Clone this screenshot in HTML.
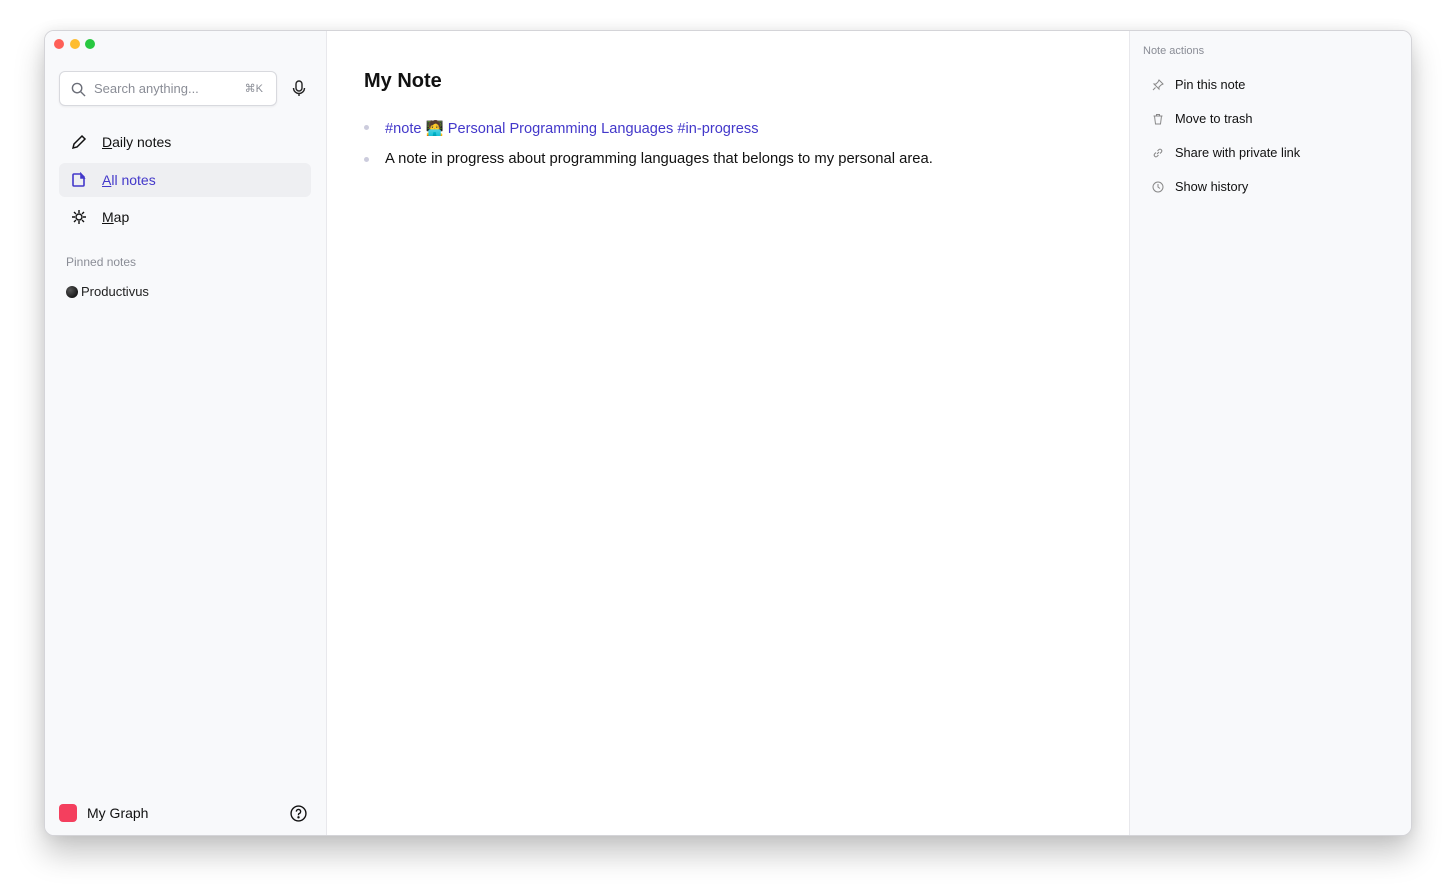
<!DOCTYPE html>
<html><head><meta charset="utf-8"><style>
*{box-sizing:border-box;margin:0;padding:0}
body{width:1456px;height:894px;background:#fff;font-family:"Liberation Sans",sans-serif;position:relative;overflow:hidden;color:#111}
.win{position:absolute;left:44px;top:30px;width:1368px;height:806px;border-radius:10px;background:#fff;border:1px solid #d4d4d8;box-shadow:0 18px 30px rgba(0,0,0,.22),0 0 14px rgba(0,0,0,.08);overflow:hidden}
.in{position:absolute;left:-1px;top:-1px;width:1368px;height:806px}
.side{position:absolute;left:0;top:0;width:283px;height:100%;background:#f8f9fb;border-right:1px solid #e8e8ec}
.right{position:absolute;left:1085px;top:0;right:0;height:100%;background:#f8f9fb;border-left:1px solid #e8e8ec}
.dot{position:absolute;top:9px;width:10px;height:10px;border-radius:50%}
.search{position:absolute;left:15px;top:41px;width:218px;height:35px;background:#fff;border:1px solid #d8d9de;border-radius:6px;box-shadow:0 1px 2px rgba(0,0,0,.06);font-size:13px;color:#8a8d96}
.nav{position:absolute;left:15px;width:252px;height:34px;border-radius:6px;font-size:14px;display:flex;align-items:center;padding-left:12px}
.nav svg{margin-right:15px}
.act{position:absolute;left:22px;font-size:12.8px;color:#111;display:flex;align-items:center}
.act svg{margin-right:11px}
</style></head><body>
<div class="win"><div class="in">
<div class="side">
<div class="dot" style="left:10px;background:#fe5f57"></div>
<div class="dot" style="left:26px;background:#febc2e"></div>
<div class="dot" style="left:41px;background:#28c840"></div>
<div class="search">
<svg style="position:absolute;left:11px;top:10px" width="15" height="15" viewBox="0 0 16 16" fill="none" stroke="#6b6e78" stroke-width="1.5"><circle cx="6.5" cy="6.5" r="5"/><path d="M10.5 10.5L15 15"/></svg>
<span style="position:absolute;left:34px;top:9px">Search anything...</span>
<span style="position:absolute;right:13px;top:10px;font-size:11px">⌘K</span>
</div>
<svg style="position:absolute;left:248px;top:50px" width="14" height="17" viewBox="0 0 14 17" fill="none" stroke="#222" stroke-width="1.4"><rect x="4" y="1" width="6" height="10" rx="3"/><path d="M1.5 8a5.5 5.5 0 0 0 11 0M7 13.5V16"/></svg>
<div class="nav" style="top:95px"><svg width="16" height="16" viewBox="0 0 16 16" fill="none" stroke="#111" stroke-width="1.5"><path d="M2 14l1-4 8-8 3 3-8 8z"/></svg><span><u>D</u>aily notes</span></div>
<div class="nav" style="top:133px;background:#eeeff2;color:#4338ca"><svg width="16" height="16" viewBox="0 0 16 16" fill="none" stroke="#4338ca" stroke-width="1.6"><path d="M3 2h7l3 3v8a1 1 0 0 1-1 1H3a1 1 0 0 1-1-1V3a1 1 0 0 1 1-1z"/><path d="M10 2v4h3z" fill="#4338ca"/></svg><span><u>A</u>ll notes</span></div>
<div class="nav" style="top:170px"><svg width="16" height="16" viewBox="0 0 16 16" fill="none" stroke="#111" stroke-width="1.4"><circle cx="8" cy="8" r="3"/><path d="M8 1v3M8 12v3M1 8h3M12 8h3M3 3l2 2M11 11l2 2M13 3l-2 2M5 11l-2 2"/></svg><span><u>M</u>ap</span></div>
<div style="position:absolute;left:22px;top:225px;font-size:12px;color:#8a8d96">Pinned notes</div>
<div style="position:absolute;left:22px;top:254px;font-size:13px;color:#222;display:flex;align-items:center"><span style="display:inline-block;width:12px;height:12px;border-radius:50%;background:radial-gradient(circle at 35% 35%,#555,#000);margin-right:3px"></span>Productivus</div>
<div style="position:absolute;left:15px;top:774px;width:18px;height:18px;border-radius:4px;background:#f43f5e"></div>
<div style="position:absolute;left:43px;top:775px;font-size:14px;color:#111">My Graph</div>
<svg style="position:absolute;left:246px;top:775px" width="17" height="17" viewBox="0 0 16 16" fill="none" stroke="#111" stroke-width="1.3"><circle cx="8" cy="8" r="7"/><path d="M6 6.2a2 2 0 1 1 2.5 1.9c-.4.2-.5.5-.5.9v.6"/><circle cx="8" cy="11.6" r=".5" fill="#111"/></svg>
</div>
<div style="position:absolute;left:320px;top:40px;font-size:20px;font-weight:bold;color:#111">My Note</div>
<div style="position:absolute;left:320px;top:95px;width:5px;height:5px;border-radius:50%;background:#ccd"></div>
<div style="position:absolute;left:341px;top:89px;font-size:14.6px;color:#4338ca">#note 🧑‍💻 Personal Programming Languages #in-progress</div>
<div style="position:absolute;left:320px;top:127px;width:5px;height:5px;border-radius:50%;background:#ccd"></div>
<div style="position:absolute;left:341px;top:121px;font-size:14.8px;color:#111">A note in progress about programming languages that belongs to my personal area.</div>
<div class="right">
<div style="position:absolute;left:13px;top:15px;font-size:11px;color:#8a8d96">Note actions</div>
<div class="act" style="top:47px"><svg width="12" height="12" viewBox="0 0 12 12" fill="none" stroke="#888" stroke-width="1"><path d="M7 1l4 4-2 1-2 2 0 2-5-5 2 0 2-2zM3.5 8.5L1 11"/></svg>Pin this note</div>
<div class="act" style="top:81px"><svg width="12" height="12" viewBox="0 0 12 12" fill="none" stroke="#888" stroke-width="1"><path d="M1.5 3h9M4.5 3V1.5h3V3M2.5 3l1 8h5l1-8"/></svg>Move to trash</div>
<div class="act" style="top:115px"><svg width="12" height="12" viewBox="0 0 12 12" fill="none" stroke="#888" stroke-width="1"><path d="M5 7l2-2M4 5.5L2.5 7a1.8 1.8 0 0 0 2.5 2.5L6.5 8M8 6.5L9.5 5A1.8 1.8 0 0 0 7 2.5L5.5 4"/></svg>Share with private link</div>
<div class="act" style="top:149px"><svg width="12" height="12" viewBox="0 0 12 12" fill="none" stroke="#888" stroke-width="1"><circle cx="6" cy="6" r="5"/><path d="M6 3v3l2 1.5"/></svg>Show history</div>
</div>
</div></div>
</body></html>
